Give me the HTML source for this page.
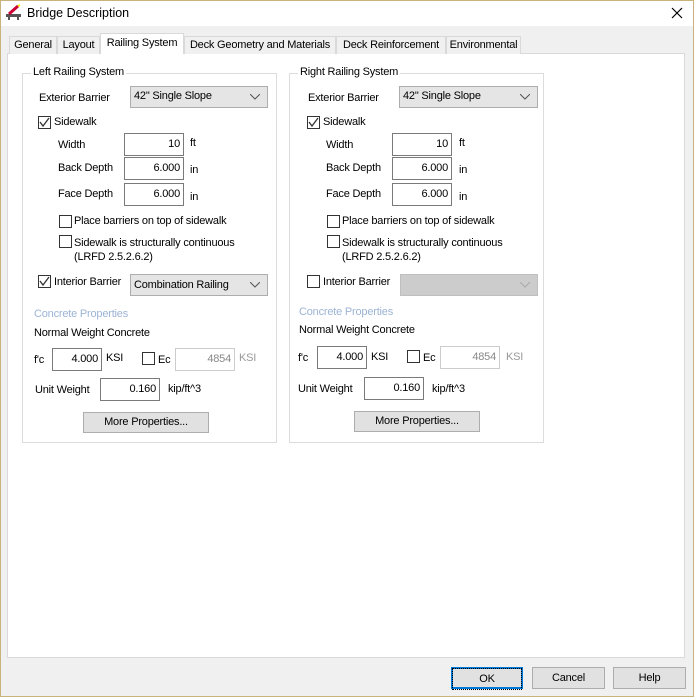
<!DOCTYPE html><html><head><style>
*{margin:0;padding:0;box-sizing:border-box}
body{width:694px;height:697px;background:#f0f0f0;font-family:"Liberation Sans",sans-serif;font-size:11px;letter-spacing:-0.2px;color:#000;position:relative;overflow:hidden}
.bd{position:absolute;left:0;top:0;width:694px;height:697px;border:1px solid #c9b37a;z-index:9;pointer-events:none}
.a{position:absolute;white-space:nowrap}
.tb{position:absolute;left:0;top:0;width:694px;height:26px;background:#fff}
.tab{position:absolute;top:36px;height:18px;border:1px solid #d9d9d9;border-bottom:none;background:#f0f0f0;text-align:center;line-height:16px;white-space:nowrap}
.panel{position:absolute;left:7px;top:53px;width:678px;height:605px;background:#fff;border:1px solid #d9d9d9}
.grp{position:absolute;border:1px solid #dcdcdc}
.gt{position:absolute;top:-8px;left:8px;background:#fff;padding:0 2px;white-space:nowrap}
.cb{position:absolute;border:1px solid #adadad;background:#e5e5e5;line-height:19px;padding-left:3px;white-space:nowrap}
.cb svg{position:absolute;right:7px;top:7px}
.tx{position:absolute;border:1px solid #7a7a7a;background:#fff;text-align:right;padding-right:3px;line-height:20px}
.chk{position:absolute;width:13px;height:13px;border:1px solid #333;background:#fff}
.btn{position:absolute;border:1px solid #adadad;background:#e1e1e1;text-align:center;line-height:19px;white-space:nowrap}
.gr{color:#9cb4d4}
</style></head><body>
<div class="bd"></div>
<div class="tb"></div>
<svg class="a" style="left:5px;top:4px" width="17" height="17"><rect x="1" y="10" width="15" height="3" fill="#555"/><rect x="3" y="13" width="2" height="3" fill="#555"/><rect x="12" y="13" width="2" height="3" fill="#555"/><path d="M4 10 L13 2" stroke="#c03" stroke-width="3"/><path d="M13 2 l2 -1" stroke="#ee0" stroke-width="2"/></svg>
<div class="a" style="left:27px;top:6px;font-size:12.5px;letter-spacing:0">Bridge Description</div>
<svg class="a" style="left:671px;top:7px" width="12" height="12"><path d="M1 1L11 11M11 1L1 11" stroke="#000" stroke-width="1.2"/></svg>
<div class="panel"></div>
<div class="tab" style="left:9px;width:48px">General</div>
<div class="tab" style="left:57px;width:43px">Layout</div>
<div class="tab" style="left:100px;width:84px;top:33px;height:21px;background:#fff;z-index:2;line-height:19px">Railing System</div>
<div class="tab" style="left:184px;width:152px">Deck Geometry and Materials</div>
<div class="tab" style="left:336px;width:110px">Deck Reinforcement</div>
<div class="tab" style="left:446px;width:75px">Environmental</div>

<div class="grp" style="left:22px;top:73px;width:255px;height:370px"><div class="gt">Left Railing System</div></div>
<div class="a" style="left:39px;top:92px">Exterior Barrier</div>
<div class="cb" style="left:130px;top:86px;width:138px;height:22px">42" Single Slope<svg width="10" height="6"><path d="M0 0L5 5L10 0" stroke="#555" fill="none"/></svg></div>
<div class="chk" style="left:38px;top:116px"><svg width="11" height="11"><path d="M1 5L4 9L10 1" stroke="#333" fill="none" stroke-width="1.3"/></svg></div>
<div class="a" style="left:54px;top:116px">Sidewalk</div>
<div class="a" style="left:58px;top:139px">Width</div><div class="tx" style="left:124px;top:133px;width:60px;height:23px">10</div><div class="a" style="left:190px;top:137px">ft</div>
<div class="a" style="left:58px;top:162px">Back Depth</div><div class="tx" style="left:124px;top:157px;width:60px;height:23px">6.000</div><div class="a" style="left:190px;top:164px">in</div>
<div class="a" style="left:58px;top:188px">Face Depth</div><div class="tx" style="left:124px;top:183px;width:60px;height:23px">6.000</div><div class="a" style="left:190px;top:191px">in</div>
<div class="chk" style="left:59px;top:215px"></div><div class="a" style="left:74px;top:215px">Place barriers on top of sidewalk</div>
<div class="chk" style="left:59px;top:235px"></div><div class="a" style="left:74px;top:236px;line-height:14px">Sidewalk is structurally continuous<br>(LRFD 2.5.2.6.2)</div>
<div class="chk" style="left:38px;top:275px"><svg width="11" height="11"><path d="M1 5L4 9L10 1" stroke="#333" fill="none" stroke-width="1.3"/></svg></div>
<div class="a" style="left:54px;top:276px">Interior Barrier</div>
<div class="cb" style="left:130px;top:274px;width:138px;height:22px;line-height:21px">Combination Railing<svg width="10" height="6"><path d="M0 0L5 5L10 0" stroke="#555" fill="none"/></svg></div>
<div class="a gr" style="left:34px;top:308px">Concrete Properties</div>
<div class="a" style="left:34px;top:327px">Normal Weight Concrete</div>
<div class="a" style="left:34px;top:354px">f'c</div><div class="tx" style="left:52px;top:348px;width:50px;height:23px">4.000</div><div class="a" style="left:106px;top:352px">KSI</div>
<div class="chk" style="left:142px;top:352px"></div><div class="a" style="left:158px;top:354px">Ec</div>
<div class="tx" style="left:175px;top:348px;width:60px;height:23px;border-color:#ccc;color:#888">4854</div><div class="a" style="left:239px;top:352px;color:#999">KSI</div>
<div class="a" style="left:35px;top:384px">Unit Weight</div><div class="tx" style="left:100px;top:378px;width:60px;height:23px">0.160</div><div class="a" style="left:168px;top:383px">kip/ft^3</div>
<div class="btn" style="left:83px;top:412px;width:126px;height:21px">More Properties...</div>

<div class="grp" style="left:289px;top:73px;width:255px;height:370px"><div class="gt">Right Railing System</div></div>
<div class="a" style="left:308px;top:92px">Exterior Barrier</div>
<div class="cb" style="left:399px;top:86px;width:139px;height:22px">42" Single Slope<svg width="10" height="6"><path d="M0 0L5 5L10 0" stroke="#555" fill="none"/></svg></div>
<div class="chk" style="left:307px;top:116px"><svg width="11" height="11"><path d="M1 5L4 9L10 1" stroke="#333" fill="none" stroke-width="1.3"/></svg></div>
<div class="a" style="left:323px;top:116px">Sidewalk</div>
<div class="a" style="left:326px;top:139px">Width</div><div class="tx" style="left:392px;top:133px;width:60px;height:23px">10</div><div class="a" style="left:459px;top:137px">ft</div>
<div class="a" style="left:326px;top:162px">Back Depth</div><div class="tx" style="left:392px;top:157px;width:60px;height:23px">6.000</div><div class="a" style="left:459px;top:164px">in</div>
<div class="a" style="left:326px;top:188px">Face Depth</div><div class="tx" style="left:392px;top:183px;width:60px;height:23px">6.000</div><div class="a" style="left:459px;top:191px">in</div>
<div class="chk" style="left:327px;top:215px"></div><div class="a" style="left:342px;top:215px">Place barriers on top of sidewalk</div>
<div class="chk" style="left:327px;top:235px"></div><div class="a" style="left:342px;top:236px;line-height:14px">Sidewalk is structurally continuous<br>(LRFD 2.5.2.6.2)</div>
<div class="chk" style="left:307px;top:275px"></div>
<div class="a" style="left:323px;top:276px">Interior Barrier</div>
<div class="cb" style="left:400px;top:274px;width:138px;height:22px;background:#ccc;border-color:#bfbfbf"><svg width="10" height="6"><path d="M0 0L5 5L10 0" stroke="#aaa" fill="none"/></svg></div>
<div class="a gr" style="left:299px;top:306px">Concrete Properties</div>
<div class="a" style="left:299px;top:324px">Normal Weight Concrete</div>
<div class="a" style="left:298px;top:352px">f'c</div><div class="tx" style="left:317px;top:346px;width:50px;height:23px">4.000</div><div class="a" style="left:371px;top:351px">KSI</div>
<div class="chk" style="left:407px;top:350px"></div><div class="a" style="left:423px;top:352px">Ec</div>
<div class="tx" style="left:440px;top:346px;width:60px;height:23px;border-color:#ccc;color:#888">4854</div><div class="a" style="left:506px;top:351px;color:#999">KSI</div>
<div class="a" style="left:298px;top:383px">Unit Weight</div><div class="tx" style="left:364px;top:377px;width:60px;height:23px">0.160</div><div class="a" style="left:432px;top:383px">kip/ft^3</div>
<div class="btn" style="left:354px;top:411px;width:126px;height:21px">More Properties...</div>

<div class="btn" style="left:451px;top:667px;width:72px;height:22px;border:2px solid #0078d7;line-height:18px"><span style="outline:1px dotted #000;outline-offset:1px;display:block;margin:1px">OK</span></div>
<div class="btn" style="left:532px;top:667px;width:73px;height:22px;line-height:20px">Cancel</div>
<div class="btn" style="left:613px;top:667px;width:73px;height:22px;line-height:20px">Help</div>
</body></html>
